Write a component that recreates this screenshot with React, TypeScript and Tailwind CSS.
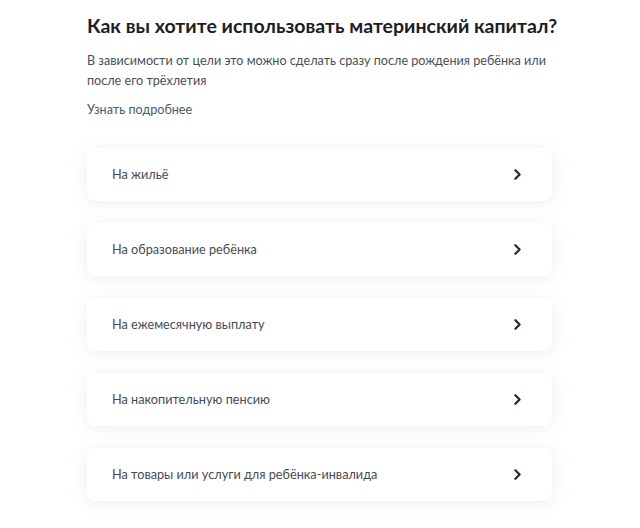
import { ChevronRight } from "lucide-react";

const items = [
  "На жильё",
  "На образование ребёнка",
  "На ежемесячную выплату",
  "На накопительную пенсию",
  "На товары или услуги для ребёнка-инвалида",
];

export default function App() {
  return (
    <div className="w-[640px] h-[528px] bg-white overflow-hidden font-['Lato','Noto_Sans',sans-serif]">
      <div className="w-[465px] ml-[87px] pt-[12px]">
        <h1 className="text-[19.5px] leading-[28px] font-bold text-[#1b1e24] whitespace-nowrap">
          Как вы хотите использовать материнский капитал?
        </h1>
        <p className="mt-[11px] w-[470px] text-[12.6px] leading-[20px] text-[#4a4f57]">
          В зависимости от цели это можно сделать сразу после рождения ребёнка или после его трёхлетия
        </p>
        <a className="block mt-[9px] text-[12.6px] leading-[20px] text-[#4d5a6b]">Узнать подробнее</a>

        <div className="mt-[28px] flex flex-col gap-[22px]">
          {items.map((t) => (
            <div
              key={t}
              className="h-[53px] bg-white rounded-[8px] shadow-[0_2px_14px_rgba(120,140,180,0.16)] flex items-center justify-between pl-[25px] pr-[26px]"
            >
              <span className="text-[12.7px] text-[#464c56]">{t}</span>
              <ChevronRight className="w-[17px] h-[19px] text-[#1e2d44]" strokeWidth={3.2} />
            </div>
          ))}
        </div>
      </div>
    </div>
  );
}
